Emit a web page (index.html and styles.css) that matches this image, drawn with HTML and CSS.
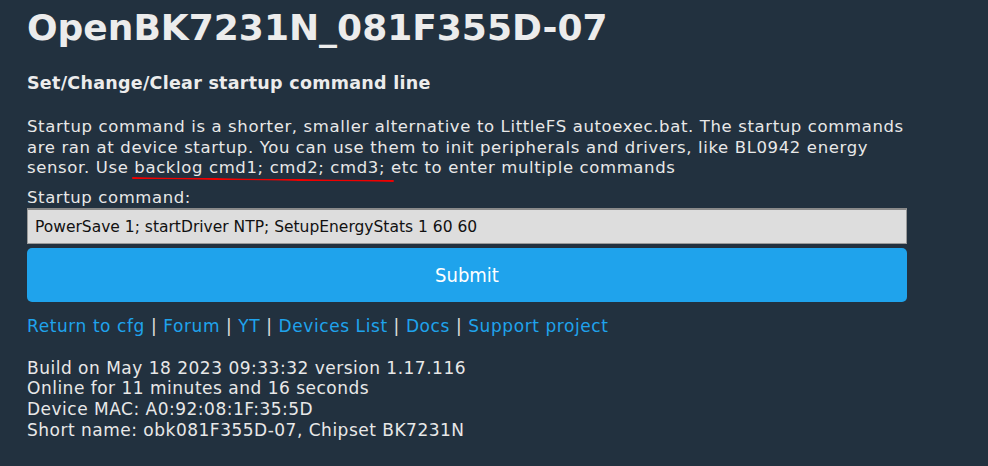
FILE: index.html
```html
<!DOCTYPE html>
<html lang="en">
<head>
<meta charset="utf-8">
<title>OpenBK7231N_081F355D-07</title>
<link rel="stylesheet" href="styles.css">
</head>
<body>
<main class="page">
  <h1 class="title">OpenBK7231N_081F355D-07</h1>
  <h2 class="subtitle">Set/Change/Clear startup command line</h2>
  <p class="intro">Startup command is a shorter, smaller alternative to LittleFS autoexec.bat. The startup commands are ran at device startup. You can use them to init peripherals and drivers, like BL0942 energy sensor. Use <span class="marked">backlog cmd1; cmd2; cmd3;</span> etc to enter multiple commands</p>
  <form class="form">
    <label class="label" for="cmd">Startup command:</label>
    <input class="field" id="cmd" type="text" value="PowerSave 1; startDriver NTP; SetupEnergyStats 1 60 60">
    <button class="submit" type="button">Submit</button>
  </form>
  <nav class="links">
    <a href="#">Return to cfg</a> | <a href="#">Forum</a> | <a href="#">YT</a> | <a href="#">Devices List</a> | <a href="#">Docs</a> | <a href="#">Support project</a>
  </nav>
  <div class="info">
    <div>Build on May 18 2023 09:33:32 version 1.17.116</div>
    <div>Online for 11 minutes and 16 seconds</div>
    <div>Device MAC: A0:92:08:1F:35:5D</div>
    <div>Short name: obk081F355D-07, Chipset BK7231N</div>
  </div>
</main>
</body>
</html>
```
FILE: styles.css
```css
html, body {
  margin: 0;
  padding: 0;
  background: #22313f;
}
body {
  color: #e8e8e8;
  font-family: "DejaVu Sans", Verdana, sans-serif;
}
.page {
  width: 880px;
  padding: 7px 27px 0 27px;
  display: flex;
  flex-direction: column;
}
.title {
  margin: 0;
  font-size: 36px;
  line-height: 42px;
  font-weight: bold;
  color: #ececec;
}
.subtitle {
  margin: 23px 0 0 0;
  font-size: 17.5px;
  letter-spacing: 0.27px;
  line-height: 22px;
  font-weight: bold;
  color: #ececec;
}
.intro {
  margin: 23px 0 0 0;
  font-size: 16.5px;
  letter-spacing: 0.63px;
  line-height: 20.7px;
}
.marked {
  position: relative;
  white-space: nowrap;
}
.marked::after {
  content: "";
  position: absolute;
  left: -2px;
  width: calc(100% + 11px);
  top: calc(100% - 0.5px);
  height: 0;
  border-top: 2px solid #f00000;
  border-radius: 1px;
  transform: rotate(0.65deg);
  transform-origin: left center;
}
.form {
  display: flex;
  flex-direction: column;
  margin: 9px 0 0 0;
}
.label {
  font-size: 16.5px;
  letter-spacing: 0.6px;
  line-height: 20px;
}
.field {
  box-sizing: border-box;
  width: 100%;
  height: 36px;
  margin: 0;
  padding: 0 7px;
  border: 1px solid #9a9a9a;
  border-top: 2px solid #8a8a8a;
  background: #dddddd;
  color: #111;
  font-family: "DejaVu Sans", sans-serif;
  font-size: 15.5px;
}
.submit {
  margin-top: 4px;
  height: 54px;
  border: 0;
  border-radius: 5px;
  background: #1fa3ec;
  color: #fff;
  font-family: "DejaVu Sans Condensed", "DejaVu Sans", sans-serif;
  font-size: 20px;
  padding: 0;
}
.links {
  margin-top: 14px;
  font-size: 17px;
  letter-spacing: 0.58px;
  line-height: 20.8px;
  color: #e0e0e0;
}
.links a {
  color: #1fa3ec;
  text-decoration: none;
}
.info {
  margin-top: 20.7px;
  font-size: 17px;
  letter-spacing: 0.5px;
  line-height: 20.8px;
}
```
